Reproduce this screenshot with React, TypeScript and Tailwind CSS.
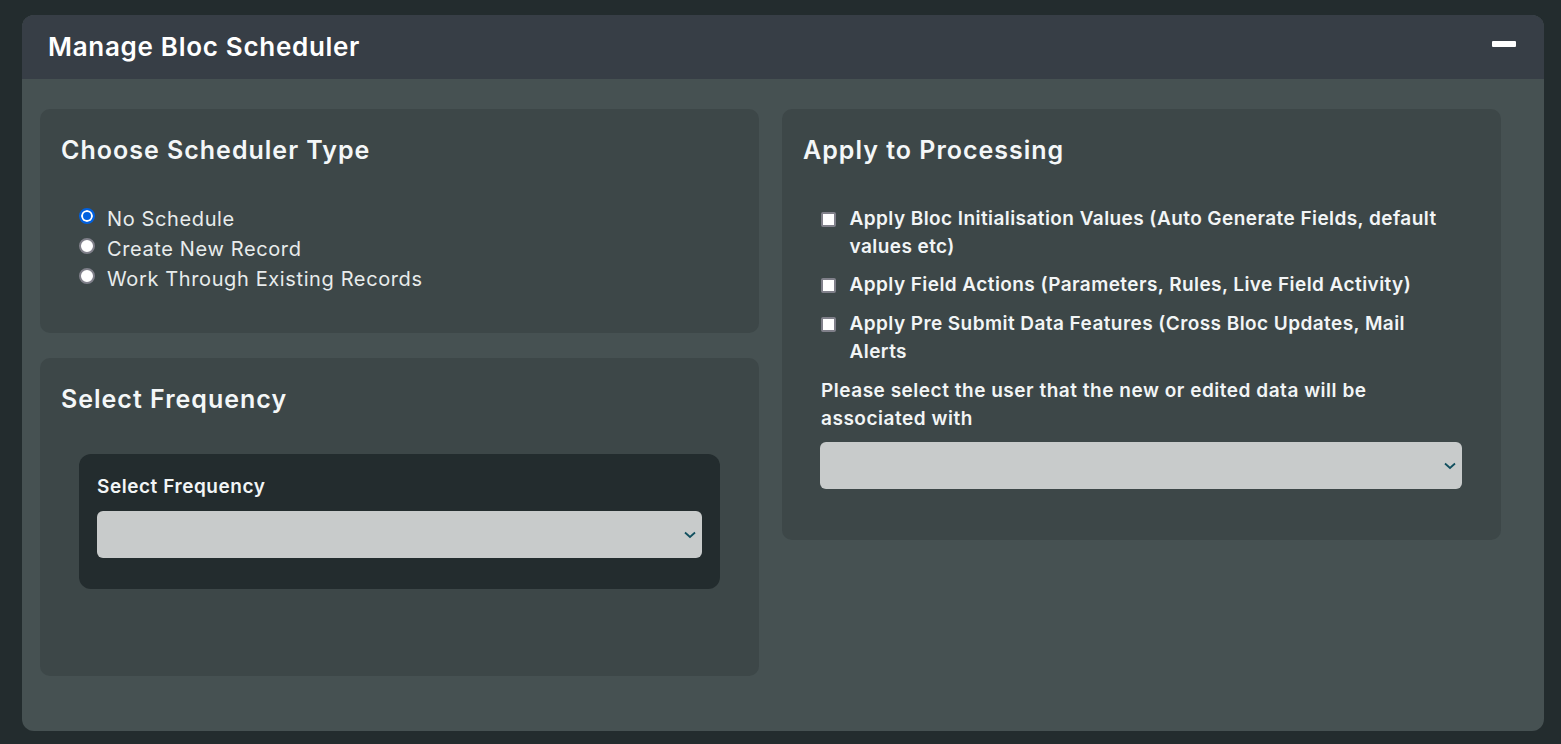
const F = "font-['Inter','Noto_Sans',sans-serif]";

function Title({ children }: { children: string }) {
  return <h2 className="text-[25px] leading-[30px] font-semibold text-[#f4f7f8] tracking-[1px]">{children}</h2>;
}

function Radio({ label, checked }: { label: string; checked?: boolean }) {
  return (
    <label className="flex h-[30px] items-center">
      <input
        type="radio"
        name="sched"
        defaultChecked={checked}
        className="m-0 h-[16px] w-[16px] -translate-y-[3px] shrink-0 appearance-none rounded-full border-2 border-[#80808a] bg-white checked:border-[#0060df] checked:bg-[#0060df] checked:shadow-[inset_0_0_0_2px_white]"
      />
      <span className="ml-[12px] text-[20px] text-[#e8ecec] tracking-[0.62px]">{label}</span>
    </label>
  );
}

function Check({ children }: { children: string }) {
  return (
    <label className="flex items-start">
      <input type="checkbox" className="m-0 mt-[7px] h-[15px] w-[15px] shrink-0 appearance-none rounded-[2px] border-2 border-[#80808a] bg-white" />
      <span className="ml-[13.5px] text-[19px] font-semibold leading-[28px] tracking-[0.43px] text-[#f2f5f6]">{children}</span>
    </label>
  );
}

function Select() {
  return (
    <div className="relative h-[47px] w-full">
      <select className="h-full w-full appearance-none rounded-[6px] bg-[#c8cbcb]" />
      <svg viewBox="0 0 12 8" width="12" height="8" fill="none" className="absolute right-[6px] top-[20px]">
        <path d="M1 1.5 L6 6 L11 1.5" stroke="#12505f" strokeWidth="1.8" />
      </svg>
    </div>
  );
}

export default function App() {
  return (
    <div className={`${F} h-[744px] overflow-hidden bg-[#232c2e] pl-[22px] pr-[17px] pt-[15px]`}>
      <div className="h-[716px] overflow-hidden rounded-[12px] bg-[#465152]">
        <div className="flex h-[64px] items-center justify-between bg-[#373e46] pl-[26px] pr-[28px]">
          <h1 className="-translate-y-[1px] text-[26px] font-semibold tracking-[0.7px] text-white">Manage Bloc Scheduler</h1>
          <div className="mb-[6px] h-[6px] w-[24px] rounded-[1px] bg-white" />
        </div>
        <div className="flex items-start gap-[23px] pl-[18px] pt-[30px]">
          <div className="flex w-[719px] flex-col gap-[25px]">
            <section className="h-[224px] rounded-[10px] bg-[#3d4748] pl-[21px] pt-[26px]">
              <Title>Choose Scheduler Type</Title>
              <div className="ml-[18px] mt-[39px] flex flex-col">
                <Radio label="No Schedule" checked />
                <Radio label="Create New Record" />
                <Radio label="Work Through Existing Records" />
              </div>
            </section>
            <section className="h-[318px] rounded-[10px] bg-[#3d4748] pl-[21px] pt-[26px]">
              <Title>Select Frequency</Title>
              <div className="ml-[18px] mt-[40px] h-[135px] w-[641px] rounded-[12px] bg-[#232c2e] px-[18px] pt-[20px]">
                <div className="mb-[12px] h-[25px] text-[19px] font-semibold leading-[25px] tracking-[0.55px] text-[#f2f5f6]">Select Frequency</div>
                <Select />
              </div>
            </section>
          </div>
          <section className="h-[431px] w-[719px] rounded-[10px] bg-[#3d4748] pl-[21px] pt-[26px]">
            <Title>Apply to Processing</Title>
            <div className="ml-[18px] mr-[39px] mt-[40px] flex flex-col gap-[10px]">
              <Check>Apply Bloc Initialisation Values (Auto Generate Fields, default values etc)</Check>
              <Check>Apply Field Actions (Parameters, Rules, Live Field Activity)</Check>
              <div className="mt-[1px]">
                <Check>Apply Pre Submit Data Features (Cross Bloc Updates, Mail Alerts</Check>
              </div>
            </div>
            <div className="ml-[18px] mr-[39px] mt-[11px] text-[19px] font-semibold leading-[28px] tracking-[0.52px] text-[#f2f5f6]">
              Please select the user that the new or edited data will be associated with
            </div>
            <div className="ml-[17px] mr-[39px] mt-[9px]"><Select /></div>
          </section>
        </div>
      </div>
    </div>
  );
}
